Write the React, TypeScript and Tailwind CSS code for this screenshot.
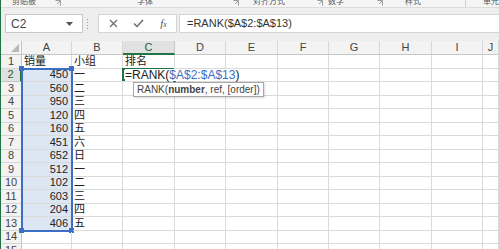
import React from "react";

const COLS = ["A", "B", "C", "D", "E", "F", "G", "H", "I", "J"];
const WIDTHS = ["w-[50px]", "w-[51px]", "w-[52px]", "w-[51px]", "w-[52px]", "w-[51px]", "w-[51px]", "w-[52px]", "w-[51px]", "flex-1"];

const DATA: [string, string][] = [
  ["450", "一"],
  ["560", "二"],
  ["950", "三"],
  ["120", "四"],
  ["160", "五"],
  ["451", "六"],
  ["652", "日"],
  ["512", "一"],
  ["102", "二"],
  ["603", "三"],
  ["204", "四"],
  ["406", "五"],
];

const cellFont = { fontFamily: '"Liberation Sans", "Noto Sans CJK SC", sans-serif' };

function Launcher() {
  return (
    <svg width="6" height="6" viewBox="0 0 6 6" className="block">
      <path d="M0.5 0.5 H5.5 V5.5" fill="none" stroke="#9a9a9a" strokeWidth="1" />
      <path d="M2 4 L5 1" stroke="#9a9a9a" strokeWidth="1" />
    </svg>
  );
}

function Ribbon() {
  return (
    <div className="flex h-[7px] items-end overflow-hidden bg-[#f5f5f5] text-[8px] leading-[10px] text-[#555]">
      <div className="w-[11px] shrink-0" />
      <div className="w-[43px] shrink-0">剪贴板</div>
      <div className="w-[82px] shrink-0 flex items-end pb-[1px]"><Launcher /></div>
      <div className="w-[96px] shrink-0">字体</div>
      <div className="w-[20px] shrink-0 flex items-end pb-[1px]"><Launcher /></div>
      <div className="w-[64px] shrink-0">对齐方式</div>
      <div className="w-[11px] shrink-0 flex items-end pb-[1px]"><Launcher /></div>
      <div className="w-[49px] shrink-0">数字</div>
      <div className="w-[28px] shrink-0 flex items-end pb-[1px]"><Launcher /></div>
      <div className="w-[60px] shrink-0">样式</div>
      <div className="w-[18px] shrink-0 flex h-full items-stretch"><div className="w-px bg-[#d0d0d0]" /></div>
      <div className="shrink-0">单元格</div>
    </div>
  );
}

function FormulaBar() {
  return (
    <div className="flex h-[34px] items-start border-t border-[#dcdcdc] bg-[#eeeeee] pt-[6px]">
      <div className="ml-[4px] flex h-[19px] w-[78px] items-center border border-[#c9c9c9] bg-white pl-[5px] text-[12px] text-[#444]">
        <span className="flex-1">C2</span>
        <svg width="7" height="4" viewBox="0 0 7 4" className="mr-[9px]">
          <path d="M0 0 H7 L3.5 4 Z" fill="#555" />
        </svg>
      </div>
      <div className="ml-[4px] flex h-[19px] flex-col items-center justify-center gap-[2px]">
        <div className="h-px w-px bg-[#999]" />
        <div className="h-px w-px bg-[#999]" />
        <div className="h-px w-px bg-[#999]" />
        <div className="h-px w-px bg-[#999]" />
      </div>
      <div className="ml-[10px] flex h-[19px] w-[79px] items-center border border-[#d4d4d4] bg-white pl-[2px]">
        <div className="flex w-[25px] justify-center">
          <svg width="9" height="9" viewBox="0 0 9 9">
            <path d="M1 1 L8 8 M8 1 L1 8" stroke="#6b6b6b" strokeWidth="1.2" />
          </svg>
        </div>
        <div className="flex w-[25px] justify-center">
          <svg width="11" height="9" viewBox="0 0 11 9">
            <path d="M1 4.5 L4 7.5 L10 1" fill="none" stroke="#6b6b6b" strokeWidth="1.5" />
          </svg>
        </div>
        <div className="flex w-[25px] justify-center">
          <span className="text-[11px] italic leading-none text-[#555]" style={{ fontFamily: '"Liberation Serif", serif' }}>
            f<span className="text-[8px]">x</span>
          </span>
        </div>
      </div>
      <div className="ml-[2px] flex h-[19px] flex-1 items-center border border-r-0 border-[#d4d4d4] bg-white pl-[7px] text-[11px] text-[#333]" style={cellFont}>
        =RANK($A$2:$A$13)
      </div>
    </div>
  );
}

function HeaderRow() {
  return (
    <div className="flex h-[14px]">
      <div className="relative w-[21px] shrink-0 border-r border-b border-[#c6c6c6] bg-[#f3f3f3]">
        <svg width="8" height="8" viewBox="0 0 8 8" className="absolute right-[2px] bottom-[2px]">
          <path d="M8 0 V8 H0 Z" fill="#b9b9b9" />
        </svg>
      </div>
      {COLS.map((c, i) => {
        const sel = c === "C";
        return (
          <div
            key={c}
            className={`${WIDTHS[i]} shrink-0 flex items-center justify-center border-r text-[11px] leading-none ${
              sel
                ? "border-b-2 border-r-[#c6c6c6] border-b-[#217346] bg-[#e1e1e1] text-[#1e5e38]"
                : "border-b border-[#d6d6d6] border-b-[#c6c6c6] bg-[#f3f3f3] text-[#444]"
            }`}
          >
            {c}
          </div>
        );
      })}
    </div>
  );
}

function Row({ n }: { n: number }) {
  const isHeaderSel = n === 2;
  const inRange = n >= 2 && n <= 13;
  const d = inRange ? DATA[n - 2] : null;
  return (
    <div className="flex h-[13.5px]">
      <div
        className={`w-[21px] shrink-0 flex items-center justify-center border-b text-[11px] leading-none ${
          isHeaderSel
            ? "border-r-2 border-r-[#217346] border-b-[#c6c6c6] bg-[#e1e1e1] text-[#1e5e38]"
            : "border-r border-[#c6c6c6] border-b-[#d6d6d6] bg-[#f3f3f3] text-[#444]"
        }`}
      >
        {n}
      </div>
      {COLS.map((c, i) => {
        let content: React.ReactNode = null;
        let extra = "";
        if (n === 1) {
          if (c === "A") content = "销量";
          if (c === "B") content = "小组";
          if (c === "C") content = "排名";
        } else if (d) {
          if (c === "A") {
            content = d[0];
            extra = "justify-end pr-[3px] bg-[#dde7f3]";
          }
          if (c === "B") content = d[1];
        }
        const isActive = n === 2 && c === "C";
        return (
          <div
            key={c}
            className={`${WIDTHS[i]} shrink-0 relative flex items-center border-r border-b border-[#dadada] text-[11px] leading-none text-[#222] ${
              extra || "pl-[2px]"
            } ${isActive ? "z-10" : ""}`}
          >
            {isActive ? (
              <>
                <div className="pointer-events-none absolute -left-[1px] -top-[1px] h-[calc(100%+1px)] w-[calc(100%+1px)] border-2 border-[#217346]" />
                <div className="absolute -right-[3px] -bottom-[3px] h-[5px] w-[5px] border border-white bg-[#217346]" />
                <span className="relative whitespace-nowrap bg-white pr-[2px] text-[12px] text-[#222]">
                  =RANK(<span className="text-[#3c6fc4]">$A$2:$A$13</span>)
                </span>
                <div className="absolute left-[10px] top-[calc(100%+1px)] flex h-[15px] items-center whitespace-nowrap border border-[#a8a8a8] bg-white px-[3px] text-[10px] text-[#444] shadow-[1px_1px_2px_rgba(0,0,0,0.15)]">
                  RANK(<span className="font-bold">number</span>, ref, [order])
                </div>
              </>
            ) : (
              content
            )}
            {c === "A" && n === 2 && (
              <>
                <div className="absolute -left-[3px] -top-[3px] h-[5px] w-[5px] bg-[#3c6fc4]" />
                <div className="absolute -right-[3px] -top-[3px] h-[5px] w-[5px] bg-[#3c6fc4]" />
              </>
            )}
            {c === "A" && n === 13 && (
              <>
                <div className="absolute -left-[3px] -bottom-[3px] h-[5px] w-[5px] bg-[#3c6fc4]" />
                <div className="absolute -right-[3px] -bottom-[3px] h-[5px] w-[5px] bg-[#3c6fc4]" />
              </>
            )}
          </div>
        );
      })}
    </div>
  );
}

export default function App() {
  const rows = Array.from({ length: 15 }, (_, i) => i + 1);
  return (
    <div
      className="h-[249px] w-[499px] overflow-hidden border-l border-[#217346] bg-white"
      style={{ fontFamily: '"Liberation Sans", "Noto Sans CJK SC", sans-serif' }}
    >
      <Ribbon />
      <FormulaBar />
      <div className="relative flex flex-col" style={cellFont}>
        <HeaderRow />
        {rows.map((n) => (
          <Row key={n} n={n} />
        ))}
        <div className="pointer-events-none absolute left-[20px] top-[26.5px] h-[164px] w-[52px] border-2 border-[#3c6fc4]" />
      </div>
    </div>
  );
}
